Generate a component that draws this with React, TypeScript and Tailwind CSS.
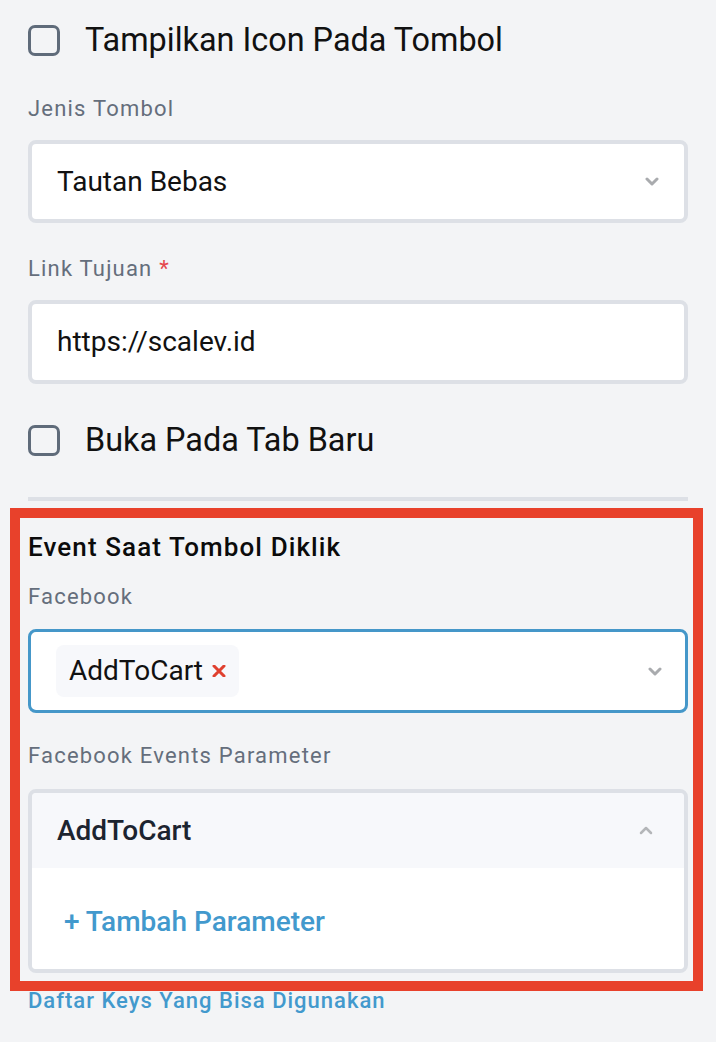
import React from 'react'

function Checkbox({ label }: { label: string }) {
  return (
    <label className="flex items-center h-[32px]">
      <span className="w-[32px] h-[31px] shrink-0 rounded-[7px] border-[3px] border-[#5f6b7a] bg-transparent"></span>
      <span className="ml-[25px] text-[32.4px] leading-[36px] text-[#111111] whitespace-nowrap">{label}</span>
    </label>
  )
}

function ChevronDown() {
  return (
    <svg width="14" height="9" viewBox="0 0 14 9" fill="none" className="shrink-0">
      <path d="M2 2l5 5 5-5" stroke="#a9abae" strokeWidth="3" strokeLinecap="round" strokeLinejoin="round" />
    </svg>
  )
}

function ChevronUp() {
  return (
    <svg width="14" height="9" viewBox="0 0 14 9" fill="none" className="shrink-0">
      <path d="M2 7l5-5 5 5" stroke="#b4b6b9" strokeWidth="2.5" strokeLinecap="round" strokeLinejoin="round" />
    </svg>
  )
}

function FieldLabel({ children }: { children: React.ReactNode }) {
  return <div className="text-[22px] leading-[26px] tracking-[1.2px] text-[#656e7c]">{children}</div>
}

export default function App() {
  return (
    <div
      className="min-h-[1042px] bg-[#f3f4f6] px-[28px] pt-[24px] overflow-hidden"
      style={{ fontFamily: 'Roboto, "Noto Sans", sans-serif' }}
    >
      <Checkbox label="Tampilkan Icon Pada Tombol" />

      <div className="mt-[40px]">
        <FieldLabel>Jenis Tombol</FieldLabel>
      </div>
      <div className="mt-[18px] h-[83px] rounded-[8px] border-[4px] border-[#dde0e6] bg-white flex items-center pl-[25px] pr-[25px]">
        <span className="flex-1 text-[28px] leading-[32px] text-[#111111]">Tautan Bebas</span>
        <ChevronDown />
      </div>

      <div className="mt-[33px]">
        <FieldLabel>
          Link Tujuan <span className="text-[#e5484d]">*</span>
        </FieldLabel>
      </div>
      <div className="mt-[18px] h-[84px] rounded-[8px] border-[4px] border-[#dde0e6] bg-white flex items-center pl-[25px]">
        <span className="text-[28px] leading-[32px] text-[#111111]">https://scalev.id</span>
      </div>

      <div className="mt-[40px]">
        <Checkbox label="Buka Pada Tab Baru" />
      </div>

      <div className="mt-[41px] h-[4px] bg-[#dde0e6]"></div>

      {/* Event section */}
      <div className="relative mt-[31px]">
        <div className="text-[26px] leading-[30px] font-medium tracking-[1.1px] text-[#0b0b0b]">Event Saat Tombol Diklik</div>

        <div className="mt-[22px]">
          <FieldLabel>Facebook</FieldLabel>
        </div>
        <div className="mt-[19px] h-[84px] rounded-[8px] border-[3px] border-[#4597c9] bg-white flex items-center pl-[25px] pr-[23px]">
          <div className="flex-1 flex">
            <span className="h-[52px] flex items-center rounded-[8px] bg-[#f7f8fb] pl-[13px] pr-[13px]">
              <span className="text-[28px] leading-[32px] text-[#111111]">AddToCart</span>
              <svg width="14" height="12" viewBox="0 0 14 12" className="ml-[9px]">
                <path d="M2 1l10 10M12 1L2 11" stroke="#e0402f" strokeWidth="3" strokeLinecap="round" />
              </svg>
            </span>
          </div>
          <ChevronDown />
        </div>

        <div className="mt-[30px]">
          <FieldLabel>Facebook Events Parameter</FieldLabel>
        </div>
        <div className="mt-[20px] rounded-[8px] border-[4px] border-[#dde0e6] overflow-hidden">
          <div className="h-[75px] bg-[#f7f8fb] flex items-center pl-[25px] pr-[31px]">
            <span className="flex-1 text-[28px] leading-[32px] font-medium text-[#1c2430]">AddToCart</span>
            <ChevronUp />
          </div>
          <div className="h-[101px] bg-white pl-[32px] pt-[38px]">
            <span className="text-[28px] leading-[32px] font-medium text-[#4299cd]">+ Tambah Parameter</span>
          </div>
        </div>

        {/* highlight frame */}
        <div className="pointer-events-none absolute left-[-18px] right-[-15px] top-[-24px] bottom-[-18px] border-[10px] border-[#e8412b]"></div>
      </div>

      <div className="mt-[15px] text-[22px] leading-[26px] font-medium tracking-[1px] text-[#4299cd]">Daftar Keys Yang Bisa Digunakan</div>
    </div>
  )
}
